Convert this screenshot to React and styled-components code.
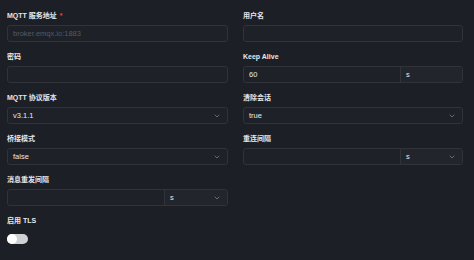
import { createGlobalStyle, styled } from "styled-components";
import { ChevronDown } from "lucide-react";

const GlobalStyle = createGlobalStyle`
  html, body {
    margin: 0;
    padding: 0;
    background: #1c1f26;
  }
  body {
    font-family: "Liberation Sans", "Noto Sans CJK SC", sans-serif;
  }
`;

const Page = styled.div`
  width: 474px;
  height: 260px;
  box-sizing: border-box;
  padding: 11px 11px 0 7px;
  background: #1c1f26;
  overflow: hidden;
`;

const Grid = styled.div`
  display: grid;
  grid-template-columns: 221px 220px;
  column-gap: 15px;
  row-gap: 10px;
`;

const Field = styled.div`
  display: flex;
  flex-direction: column;
  gap: 4px;
`;

const Label = styled.label`
  font-size: 7px;
  line-height: 10px;
  height: 10px;
  font-weight: 700;
  color: #e6e7ea;
  white-space: nowrap;
`;

const Required = styled.span`
  color: #e5484d;
  margin-left: 3px;
`;

const Box = styled.div`
  display: flex;
  align-items: stretch;
  height: 17px;
  box-sizing: border-box;
  border: 1px solid #30333a;
  border-radius: 3px;
  background: #1e2128;
  overflow: hidden;
`;

const Input = styled.input`
  flex: 1;
  min-width: 0;
  border: none;
  outline: none;
  background: transparent;
  padding: 0 5px;
  font-family: inherit;
  font-size: 7.5px;
  color: #e8e9ec;
  &::placeholder {
    color: #565a62;
  }
`;

const SelectBox = styled.div`
  flex: 1;
  display: flex;
  align-items: center;
  justify-content: space-between;
  padding: 0 6px 0 5px;
  font-size: 7.5px;
  color: #e8e9ec;
`;

const Addon = styled.div`
  width: ${(p) => p.$width}px;
  flex: none;
  display: flex;
  align-items: center;
  justify-content: space-between;
  box-sizing: border-box;
  padding: 0 6px 0 5px;
  border-left: 1px solid #30333a;
  background: #22252c;
  font-size: 7.5px;
  color: #e8e9ec;
`;

const Chevron = styled(ChevronDown)`
  color: #8a8e95;
  flex: none;
`;

const ToggleRow = styled.div`
  height: 17px;
  display: flex;
  align-items: center;
`;

const Toggle = styled.div`
  width: 21px;
  height: 10px;
  border-radius: 5px;
  background: #cfd0d4;
  position: relative;
`;

const Knob = styled.div`
  position: absolute;
  left: 0;
  top: 0;
  width: 10px;
  height: 10px;
  border-radius: 50%;
  background: #ffffff;
`;

function Select({ value }) {
  return (
    <Box>
      <SelectBox>
        <span>{value}</span>
        <Chevron size={8} strokeWidth={2} />
      </SelectBox>
    </Box>
  );
}

function UnitInput({ value, unit, select, width = 62 }) {
  return (
    <Box>
      <Input defaultValue={value} />
      <Addon $width={width}>
        <span>{unit}</span>
        {select && <Chevron size={8} strokeWidth={2} />}
      </Addon>
    </Box>
  );
}

export default function App() {
  return (
    <Page>
      <GlobalStyle />
      <Grid>
        <Field>
          <Label>
            MQTT 服务地址<Required>*</Required>
          </Label>
          <Box>
            <Input placeholder="broker.emqx.io:1883" />
          </Box>
        </Field>
        <Field>
          <Label>用户名</Label>
          <Box>
            <Input />
          </Box>
        </Field>
        <Field>
          <Label>密码</Label>
          <Box>
            <Input type="password" />
          </Box>
        </Field>
        <Field>
          <Label>Keep Alive</Label>
          <UnitInput value="60" unit="s" />
        </Field>
        <Field>
          <Label>MQTT 协议版本</Label>
          <Select value="v3.1.1" />
        </Field>
        <Field>
          <Label>清除会话</Label>
          <Select value="true" />
        </Field>
        <Field>
          <Label>桥接模式</Label>
          <Select value="false" />
        </Field>
        <Field>
          <Label>重连间隔</Label>
          <UnitInput value="" unit="s" select />
        </Field>
        <Field>
          <Label>消息重发间隔</Label>
          <UnitInput value="" unit="s" select width={63} />
        </Field>
        <div />
        <Field>
          <Label>启用 TLS</Label>
          <ToggleRow>
            <Toggle>
              <Knob />
            </Toggle>
          </ToggleRow>
        </Field>
      </Grid>
    </Page>
  );
}
